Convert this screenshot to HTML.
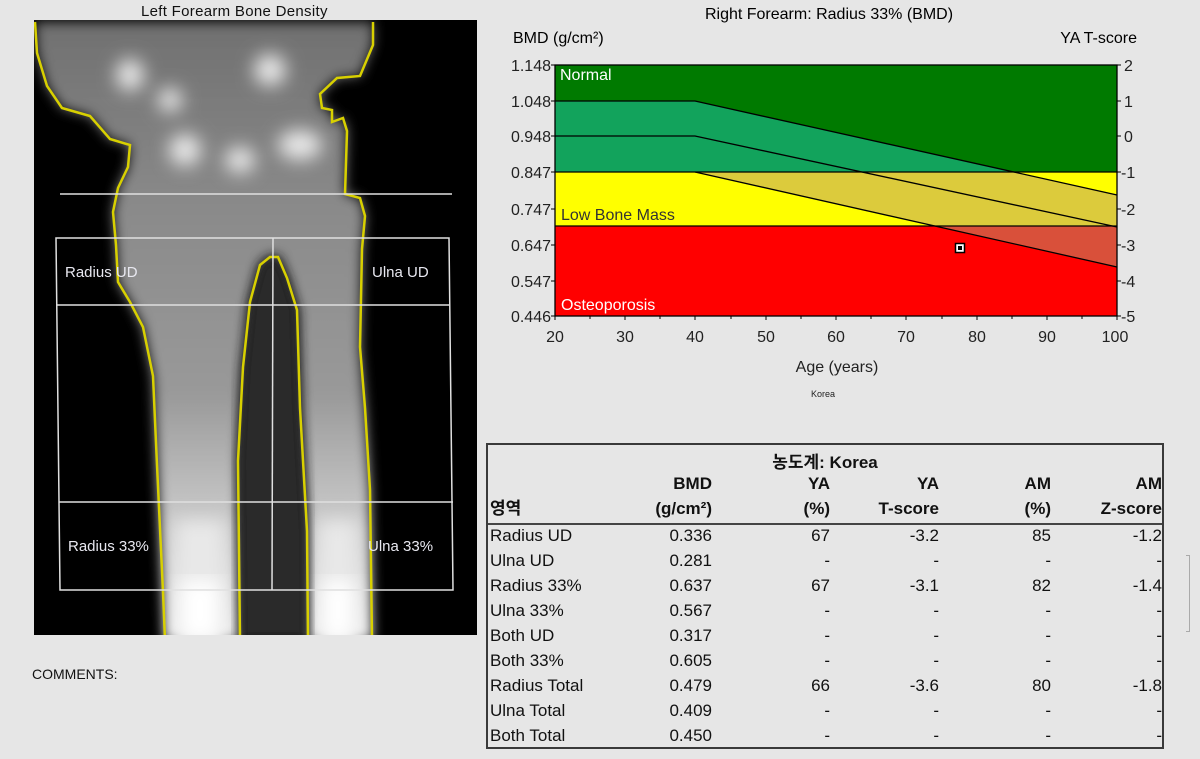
<!DOCTYPE html>
<html><head><meta charset="utf-8"><style>
body{margin:0;width:1200px;height:759px;background:#e6e6e6;font-family:"Liberation Sans","Noto Sans CJK KR",sans-serif;position:relative;overflow:hidden;color:#111}
.a{position:absolute;white-space:nowrap}
table{border-collapse:collapse}
td{padding:0;height:25px;line-height:25px}
</style></head><body>
<div class="a" style="left:141px;top:3px;font-size:15px;letter-spacing:0.3px">Left Forearm Bone Density</div>
<svg class="a" style="left:0;top:0" width="480" height="640">
<defs>
<clipPath id="img"><rect x="34" y="20" width="443" height="615"/></clipPath>
<filter id="bl"><feGaussianBlur stdDeviation="6"/></filter>
<filter id="bl2"><feGaussianBlur stdDeviation="9"/></filter>
<linearGradient id="bone" x1="0" y1="0" x2="0" y2="1"><stop offset="0" stop-color="#707070"/><stop offset="0.3" stop-color="#8a8a8a"/><stop offset="0.6" stop-color="#999"/><stop offset="0.8" stop-color="#c8c8c8"/><stop offset="1" stop-color="#eee"/></linearGradient>
</defs>
<g clip-path="url(#img)">
<rect x="34" y="20" width="443" height="615" fill="#000"/>
<g filter="url(#bl)">
<path d="M35,22 L37,53 L47,86 L62,108 L90,116 L110,139 L130,145 L128,167 L118,188 L113,212 L116,245 L118,282 L130,302 L143,327 L153,376 L157,465 L163,592 L165,640 L240,640 L238,461 L243,367 L250,302 L260,265 L270,257 L278,257 L287,278 L297,310 L300,408 L307,531 L308,640 L372,640 L370,490 L365,408 L360,347 L362,249 L365,216 L360,198 L345,194 L347,131 L343,118 L332,122 L332,110 L322,108 L320,94 L337,78 L360,76 L373,45 L373,22 Z" fill="url(#bone)"/>
</g>
<g filter="url(#bl2)" fill="#e8e8e8">
<ellipse cx="130" cy="75" rx="14" ry="16"/><ellipse cx="185" cy="150" rx="16" ry="16"/><ellipse cx="240" cy="160" rx="15" ry="13"/><ellipse cx="300" cy="145" rx="22" ry="15"/><ellipse cx="270" cy="70" rx="16" ry="16"/><ellipse cx="170" cy="100" rx="12" ry="12"/>
<rect x="175" y="520" width="50" height="130"/><rect x="318" y="520" width="40" height="130"/>
</g>
<g filter="url(#bl2)" fill="#fff"><rect x="180" y="580" width="40" height="60"/><rect x="322" y="580" width="32" height="60"/></g>
<g filter="url(#bl)" fill="#2a2a2a"><path d="M240,640 L238,461 L243,367 L250,302 L260,265 L270,257 L278,257 L287,278 L297,310 L300,408 L307,531 L308,640Z"/></g>
<g fill="none" stroke="#d8d000" stroke-width="2.5">
<path d="M35,22 L37,53 L47,86 L62,108 L90,116 L110,139 L130,145 L128,167 L118,188 L113,212 L116,245 L118,282 L130,302 L143,327 L153,376 L157,465 L163,592 L165,640"/>
<path d="M240,640 L238,461 L243,367 L250,302 L260,265 L270,257 L278,257 L287,278 L297,310 L300,408 L307,531 L308,640"/>
<path d="M372,640 L370,490 L365,408 L360,347 L362,249 L365,216 L360,198 L345,194 L347,131 L343,118 L332,122 L332,110 L322,108 L320,94 L337,78 L360,76 L373,45 L373,22"/>
</g>
<g fill="none" stroke="#e0e0e0" stroke-width="1.5">
<line x1="60" y1="194" x2="452" y2="194"/>
<path d="M56,238 L449,238 L453,590 L60,590 Z"/>
<line x1="57" y1="305" x2="450" y2="305"/>
<line x1="59" y1="502" x2="453" y2="502"/>
<line x1="273" y1="238" x2="272" y2="590"/>
</g>
<g fill="#e8e8f0" font-size="15" font-family="Liberation Sans,sans-serif">
<text x="65" y="277">Radius UD</text><text x="372" y="277">Ulna UD</text>
<text x="68" y="551">Radius 33%</text><text x="368" y="551">Ulna 33%</text>
</g>
</g>
<line x1="481" y1="20" x2="481" y2="632" stroke="#000" stroke-width="2"/>
</svg>
<div class="a" style="left:32px;top:666px;font-size:14px">COMMENTS:</div>

<svg class="a" style="left:0;top:0" width="1200" height="440" font-family="Liberation Sans,sans-serif">
<defs>
<clipPath id="cg"><rect x="555" y="65" width="562" height="107"/></clipPath>
<clipPath id="cy"><rect x="555" y="172" width="562" height="54"/></clipPath>
<clipPath id="cr"><rect x="555" y="226" width="562" height="90"/></clipPath>
</defs>
<text x="829" y="19" font-size="16" text-anchor="middle">Right Forearm: Radius 33% (BMD)</text>
<text x="513" y="43" font-size="16">BMD (g/cm²)</text>
<text x="1137" y="43" font-size="16" text-anchor="end">YA T-score</text>
<rect x="555" y="65" width="562" height="107" fill="#007a00"/>
<rect x="555" y="172" width="562" height="54" fill="#ffff00"/>
<rect x="555" y="226" width="562" height="90" fill="#ff0000"/>
<g>
<path d="M555,101 L695,101 L1117,195 L1117,267 L695,172 L555,172Z" fill="#12a35c" clip-path="url(#cg)"/>
<path d="M555,101 L695,101 L1117,195 L1117,267 L695,172 L555,172Z" fill="#dccb3c" clip-path="url(#cy)"/>
<path d="M555,101 L695,101 L1117,195 L1117,267 L695,172 L555,172Z" fill="#d9503a" clip-path="url(#cr)"/>
</g>
<g stroke="#000" stroke-width="1.3" fill="none">
<path d="M555,101 L695,101 L1117,195"/>
<path d="M555,136 L695,136 L1117,227"/>
<path d="M695,172 L1117,267"/>
<line x1="555" y1="172" x2="1117" y2="172"/>
<line x1="555" y1="226" x2="1117" y2="226"/>
<rect x="555" y="65" width="562" height="251"/>
</g>
<rect x="955.5" y="243.5" width="9" height="9" fill="#fff" stroke="#000" stroke-width="1.5"/>
<rect x="958" y="246" width="4" height="4" fill="#000"/>
<g fill="#fff" font-size="16"><text x="560" y="80">Normal</text><text x="561" y="310">Osteoporosis</text></g>
<text x="561" y="220" font-size="16" fill="#333">Low Bone Mass</text>
<g font-size="16" text-anchor="end" fill="#222">
<text x="551" y="71">1.148</text><text x="551" y="107">1.048</text><text x="551" y="142">0.948</text><text x="551" y="178">0.847</text><text x="551" y="215">0.747</text><text x="551" y="251">0.647</text><text x="551" y="287">0.547</text><text x="551" y="322">0.446</text>
</g>
<g font-size="16" fill="#222">
<text x="1124" y="71">2</text><text x="1124" y="107">1</text><text x="1124" y="142">0</text><text x="1121" y="178">-1</text><text x="1121" y="215">-2</text><text x="1121" y="251">-3</text><text x="1121" y="287">-4</text><text x="1121" y="322">-5</text>
</g>
<g font-size="16" text-anchor="middle" fill="#222">
<text x="555" y="342">20</text><text x="625" y="342">30</text><text x="695" y="342">40</text><text x="766" y="342">50</text><text x="836" y="342">60</text><text x="906" y="342">70</text><text x="977" y="342">80</text><text x="1047" y="342">90</text><text x="1115" y="342">100</text>
<text x="837" y="372">Age (years)</text>
<text x="823" y="397" font-size="9">Korea</text>
</g>
<g stroke="#000" stroke-width="1">
<path d="M555,316v4M590,316v3M625,316v4M660,316v3M695,316v4M731,316v3M766,316v4M801,316v3M836,316v4M871,316v3M906,316v4M942,316v3M977,316v4M1012,316v3M1047,316v4M1082,316v3M1117,316v4"/>
<path d="M551,65h4M551,101h4M551,136h4M551,172h4M551,209h4M551,245h4M551,281h4M551,316h4M1117,65h4M1117,101h4M1117,136h4M1117,172h4M1117,209h4M1117,245h4M1117,281h4M1117,316h4"/>
</g>
</svg>

<div class="a" style="left:486px;top:443px;width:674px;height:302px;border:2px solid #3a3a3a;font-size:17px;">
<div style="position:absolute;left:0;top:3px;width:674px;text-align:center;font-weight:bold">농도계: Korea</div>
<div style="position:absolute;left:0;top:78px;width:674px;border-top:2px solid #444"></div>
<table style="position:absolute;left:2px;top:26px;width:672px;font-size:17px">
<colgroup><col style="width:120px"><col style="width:102px"><col style="width:118px"><col style="width:109px"><col style="width:112px"><col style="width:111px"></colgroup>
<tr style="font-weight:bold"><td></td><td align="right">BMD</td><td align="right">YA</td><td align="right">YA</td><td align="right">AM</td><td align="right">AM</td></tr>
<tr style="font-weight:bold"><td>영역</td><td align="right">(g/cm²)</td><td align="right">(%)</td><td align="right">T-score</td><td align="right">(%)</td><td align="right">Z-score</td></tr>
</table>
<table style="position:absolute;left:2px;top:78px;width:672px;font-size:17px">
<colgroup><col style="width:120px"><col style="width:102px"><col style="width:118px"><col style="width:109px"><col style="width:112px"><col style="width:111px"></colgroup>
<tr><td>Radius UD</td><td align="right">0.336</td><td align="right">67</td><td align="right">-3.2</td><td align="right">85</td><td align="right">-1.2</td></tr>
<tr><td>Ulna UD</td><td align="right">0.281</td><td align="right">-</td><td align="right">-</td><td align="right">-</td><td align="right">-</td></tr>
<tr><td>Radius 33%</td><td align="right">0.637</td><td align="right">67</td><td align="right">-3.1</td><td align="right">82</td><td align="right">-1.4</td></tr>
<tr><td>Ulna 33%</td><td align="right">0.567</td><td align="right">-</td><td align="right">-</td><td align="right">-</td><td align="right">-</td></tr>
<tr><td>Both UD</td><td align="right">0.317</td><td align="right">-</td><td align="right">-</td><td align="right">-</td><td align="right">-</td></tr>
<tr><td>Both 33%</td><td align="right">0.605</td><td align="right">-</td><td align="right">-</td><td align="right">-</td><td align="right">-</td></tr>
<tr><td>Radius Total</td><td align="right">0.479</td><td align="right">66</td><td align="right">-3.6</td><td align="right">80</td><td align="right">-1.8</td></tr>
<tr><td>Ulna Total</td><td align="right">0.409</td><td align="right">-</td><td align="right">-</td><td align="right">-</td><td align="right">-</td></tr>
<tr><td>Both Total</td><td align="right">0.450</td><td align="right">-</td><td align="right">-</td><td align="right">-</td><td align="right">-</td></tr>
</table>
</div>
<div class="a" style="left:1186px;top:555px;width:3px;height:75px;border:1px solid #aaa;border-left:none"></div>
</body></html>
